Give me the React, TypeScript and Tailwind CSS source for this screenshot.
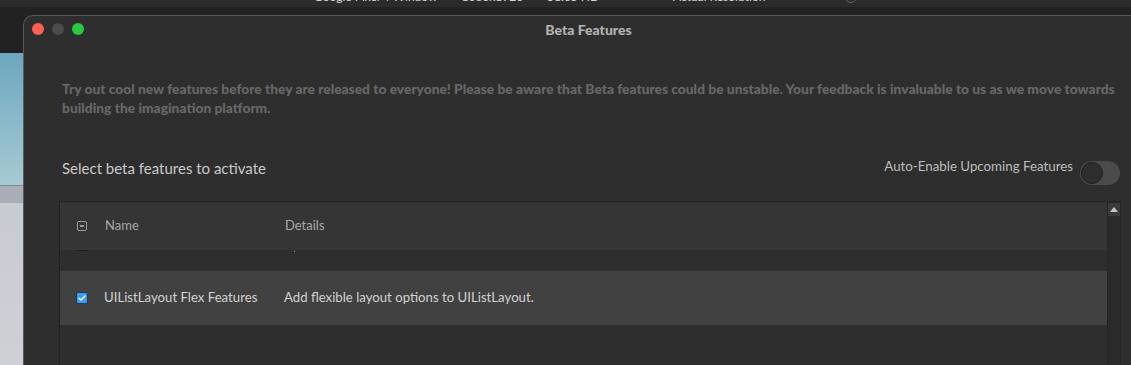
import React from "react";

const font = { fontFamily: "Lato, 'Noto Sans', sans-serif" };

const MenuStrip: React.FC = () => (
  <div className="h-[7px] bg-[#2b2b2b] relative overflow-hidden text-[12px] text-[#d8d8d8]">
    <div className="absolute left-[314px] -top-[12px] flex gap-[24px] whitespace-nowrap">
      <span>Google Pixel 4 Window</span>
      <span>1080x1920</span>
      <span>51.05 HD</span>
    </div>
    <span className="absolute left-[673px] -top-[12px] whitespace-nowrap">Actual Resolution</span>
    <span className="absolute left-[845px] -top-[9px] w-[12px] h-[12px] rounded-full border border-[#666]" />
  </div>
);

const Backdrop: React.FC = () => (
  <div className="w-[23px] flex flex-col shrink-0">
    <div className="h-[46px] bg-[#222222]" />
    <div className="h-[132px] bg-gradient-to-b from-[#6da7c0] to-[#a6cad2]" />
    <div className="h-[1px] bg-[#7c8a96]" />
    <div className="h-[17px] bg-[#a9adb8]" />
    <div className="flex-1 bg-gradient-to-b from-[#c9cbd2] to-[#cfd0d6]" />
  </div>
);

const Toggle: React.FC = () => (
  <div className="w-[40px] h-[24px] rounded-full bg-[#4b4b4b] flex items-center pl-[1px]">
    <div className="w-[22px] h-[22px] rounded-full bg-[#2e2e2e] border border-[#1e1e1e]" />
  </div>
);

const HeaderCheck: React.FC = () => (
  <div className="w-[10px] h-[10px] rounded-[2px] border border-[#9c9c9c] flex items-center justify-center">
    <div className="w-[4px] h-[1.5px] bg-[#9c9c9c]" />
  </div>
);

const RowCheck: React.FC = () => (
  <div className="w-[12px] h-[12px] rounded-[2px] bg-[#3a9df2] border border-[#1c3a55] flex items-center justify-center">
    <svg width="8" height="6" viewBox="0 0 8 6" fill="none">
      <path d="M1 3.2 L3 5 L7 1" stroke="#ffffff" strokeWidth="1.4" strokeLinecap="round" strokeLinejoin="round" />
    </svg>
  </div>
);

const App: React.FC = () => {
  return (
    <div className="w-[1131px] h-[365px] overflow-hidden bg-[#222222] flex flex-col" style={font}>
      <MenuStrip />
      <div className="flex flex-1 min-h-0">
        <Backdrop />
        <div className="mt-[8px] w-[1130px] shrink-0 rounded-tl-[10px] border-t border-l border-[#5a5a5a] bg-[#2e2e2e] flex flex-col">
          {/* title bar */}
          <div className="h-[26px] flex items-center relative">
            <div className="flex gap-[8px] pl-[8px]">
              <span className="w-[12px] h-[12px] rounded-full bg-[#fe5f57]" />
              <span className="w-[12px] h-[12px] rounded-full bg-[#4c4c4c]" />
              <span className="w-[12px] h-[12px] rounded-full bg-[#28c840]" />
            </div>
            <div className="absolute inset-0 flex items-center justify-center text-[14px] font-black text-[#b3b3b3]">
              Beta Features
            </div>
          </div>

          {/* description */}
          <p className="mt-[37px] ml-[38px] mr-[34px] text-[13.8px] leading-[19px] font-black text-[#686868]">
            Try out cool new features before they are released to everyone! Please be aware that Beta features could be unstable. Your feedback is invaluable to us as we move towards building the imagination platform.
          </p>

          {/* select row */}
          <div className="mt-[39px] ml-[38px] mr-[33px] flex items-center justify-between">
            <span className="text-[15px] text-[#c9c9c9]">Select beta features to activate</span>
            <div className="flex items-center gap-[7px] translate-y-[5px]">
              <span className="text-[13.3px] text-[#bdbdbd] -translate-y-[6px]">Auto-Enable Upcoming Features</span>
              <Toggle />
            </div>
          </div>

          {/* table */}
          <div className="mt-[21px] ml-[35px] mr-[32px] flex-1 border-t border-l border-[#222222] flex">
            <div className="flex-1 flex flex-col">
              <div className="h-[48px] bg-[#353535] flex items-center text-[13px] text-[#a9a9a9]">
                <div className="w-[45px] pl-[17px]">
                  <HeaderCheck />
                </div>
                <span className="w-[180px]">Name</span>
                <span>Details</span>
              </div>
              <div className="h-[21px] relative">
                <span className="absolute left-[16px] top-0 w-[12px] h-[1px] bg-[#1c1c1c]" />
                <span className="absolute left-[234px] top-[1px] w-[1px] h-[1px] bg-[#9a9a9a]" />
              </div>
              <div className="h-[54px] bg-[#414141] flex items-center text-[13.2px] text-[#d2d2d2]">
                <div className="w-[44px] pl-[16px]">
                  <RowCheck />
                </div>
                <span className="w-[180px]">UIListLayout Flex Features</span>
                <span>Add flexible layout options to UIListLayout.</span>
              </div>
            </div>
            <div className="w-[14px] bg-[#2a2a2a] border-l border-r border-[#252525] flex flex-col items-center pt-[1px]">
              <div className="w-[12px] h-[13px] bg-[#3b3b3b] flex items-center justify-center">
                <div className="w-0 h-0 border-l-[4px] border-r-[4px] border-b-[5px] border-l-transparent border-r-transparent border-b-[#c8c8c8]" />
              </div>
            </div>
          </div>
        </div>
      </div>
    </div>
  );
};

export default App;
